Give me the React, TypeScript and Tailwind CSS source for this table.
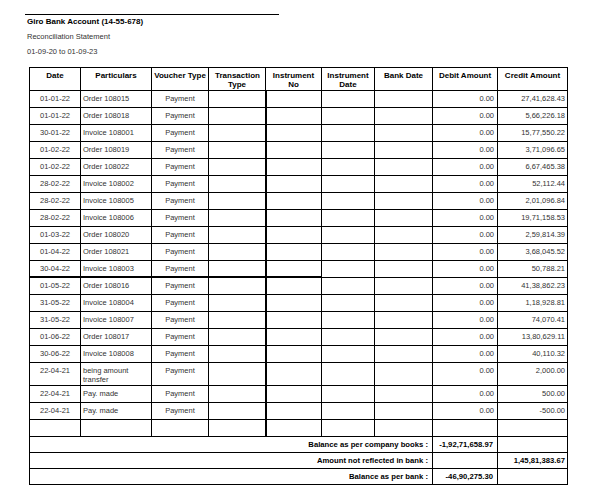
import React from "react";

type Row = { date: string; part: string; credit: string; tall?: boolean };

const rows: Row[] = [
  { date: "01-01-22", part: "Order 108015", credit: "27,41,628.43" },
  { date: "01-01-22", part: "Order 108018", credit: "5,66,226.18" },
  { date: "30-01-22", part: "Invoice 108001", credit: "15,77,550.22" },
  { date: "01-02-22", part: "Order 108019", credit: "3,71,096.65" },
  { date: "01-02-22", part: "Order 108022", credit: "6,67,465.38" },
  { date: "28-02-22", part: "Invoice 108002", credit: "52,112.44" },
  { date: "28-02-22", part: "Invoice 108005", credit: "2,01,096.84" },
  { date: "28-02-22", part: "Invoice 108006", credit: "19,71,158.53" },
  { date: "01-03-22", part: "Order 108020", credit: "2,59,814.39" },
  { date: "01-04-22", part: "Order 108021", credit: "3,68,045.52" },
  { date: "30-04-22", part: "Invoice 108003", credit: "50,788.21" },
  { date: "01-05-22", part: "Order 108016", credit: "41,38,862.23" },
  { date: "31-05-22", part: "Invoice 108004", credit: "1,18,928.81" },
  { date: "31-05-22", part: "Invoice 108007", credit: "74,070.41" },
  { date: "01-06-22", part: "Order 108017", credit: "13,80,629.11" },
  { date: "30-06-22", part: "Invoice 108008", credit: "40,110.32" },
  { date: "22-04-21", part: "being amount transfer", credit: "2,000.00", tall: true },
  { date: "22-04-21", part: "Pay. made", credit: "500.00" },
  { date: "22-04-21", part: "Pay. made", credit: "-500.00" },
];

const font = { fontFamily: "'Liberation Sans', Arial, sans-serif" };

export default function App() {
  return (
    <div className="w-[589px] h-[503px] bg-white overflow-hidden pt-[14px]" style={font}>
      <div className="ml-[25px] w-[254px] border-t border-black" />
      <div className="ml-[27px] mt-[1.5px] text-[8px] leading-[10px] font-bold text-black">
        Giro Bank Account (14-55-678)
      </div>
      <div className="ml-[27px] mt-[5px] text-[7.5px] leading-[10px] text-[#333]">
        Reconciliation Statement
      </div>
      <div className="ml-[27px] mt-[5px] text-[7.5px] leading-[10px] text-[#333]">
        01-09-20 to 01-09-23
      </div>
      <table className="ml-[29px] mt-[10px] w-[538px] table-fixed border-collapse text-[7.5px] leading-[9px] text-[#333]">
        <colgroup>
          <col className="w-[51px]" />
          <col className="w-[71px]" />
          <col className="w-[57px]" />
          <col className="w-[57px]" />
          <col className="w-[56px]" />
          <col className="w-[53px]" />
          <col className="w-[58px]" />
          <col className="w-[65px]" />
          <col className="w-[70px]" />
        </colgroup>
        <thead>
          <tr className="h-[23px] text-[8px] font-bold text-black">
            <th className="border border-black align-top pt-[3px] px-0 font-bold">Date</th>
            <th className="border border-black align-top pt-[3px] px-0 font-bold">Particulars</th>
            <th className="border border-black align-top pt-[3px] px-0 font-bold whitespace-nowrap">Voucher Type</th>
            <th className="border border-black align-top pt-[3px] px-[6px] font-bold">Transaction Type</th>
            <th className="border border-black align-top pt-[3px] px-[4px] font-bold">Instrument No</th>
            <th className="border border-black align-top pt-[3px] px-[4px] font-bold">Instrument Date</th>
            <th className="border border-black align-top pt-[3px] px-0 font-bold">Bank Date</th>
            <th className="border border-black align-top pt-[3px] px-0 font-bold">Debit Amount</th>
            <th className="border border-black align-top pt-[3px] px-0 font-bold">Credit Amount</th>
          </tr>
        </thead>
        <tbody>
          {rows.map((r, i) => {
            const thickB = i === 10;
            const b = thickB ? "border border-black border-b-2" : "border border-black";
            return (
              <tr key={i} className={r.tall ? "h-[23px]" : "h-[17px]"}>
                <td className={`${b} align-top pt-[3px] text-center`}>{r.date}</td>
                <td className={`${b} align-top pt-[3px] pl-[2px] pr-[8px]`}>{r.part}</td>
                <td className={`${b} align-top pt-[3px] text-center`}>Payment</td>
                <td className={`${b} border-r-2`} />
                <td className={b} />
                <td className="border border-black" />
                <td className="border border-black" />
                <td className="border border-black align-top pt-[3px] text-right pr-[3px]">0.00</td>
                <td className="border border-black align-top pt-[3px] text-right pr-[2px]">{r.credit}</td>
              </tr>
            );
          })}
          <tr className="h-[17px]">
            <td className="border border-black" />
            <td className="border border-black" />
            <td className="border border-black" />
            <td className="border border-black border-r-2" />
            <td className="border border-black" />
            <td className="border border-black" />
            <td className="border border-black" />
            <td className="border border-black" />
            <td className="border border-black" />
          </tr>
          {[
            { label: "Balance as per company books :", debit: "-1,92,71,658.97", credit: "" },
            { label: "Amount not reflected in bank :", debit: "", credit: "1,45,81,383.67" },
            { label: "Balance as per bank :", debit: "-46,90,275.30", credit: "" },
          ].map((s, i) => (
            <tr key={i} className="h-[16px] text-[7.7px] font-bold text-black">
              <td colSpan={7} className="border border-black align-top pt-[3px] text-right pr-[4px]">
                {s.label}
              </td>
              <td className="border border-black align-top pt-[3px] text-right pr-[4px]">{s.debit}</td>
              <td className="border border-black align-top pt-[3px] text-right pr-[2px]">{s.credit}</td>
            </tr>
          ))}
        </tbody>
      </table>
    </div>
  );
}
